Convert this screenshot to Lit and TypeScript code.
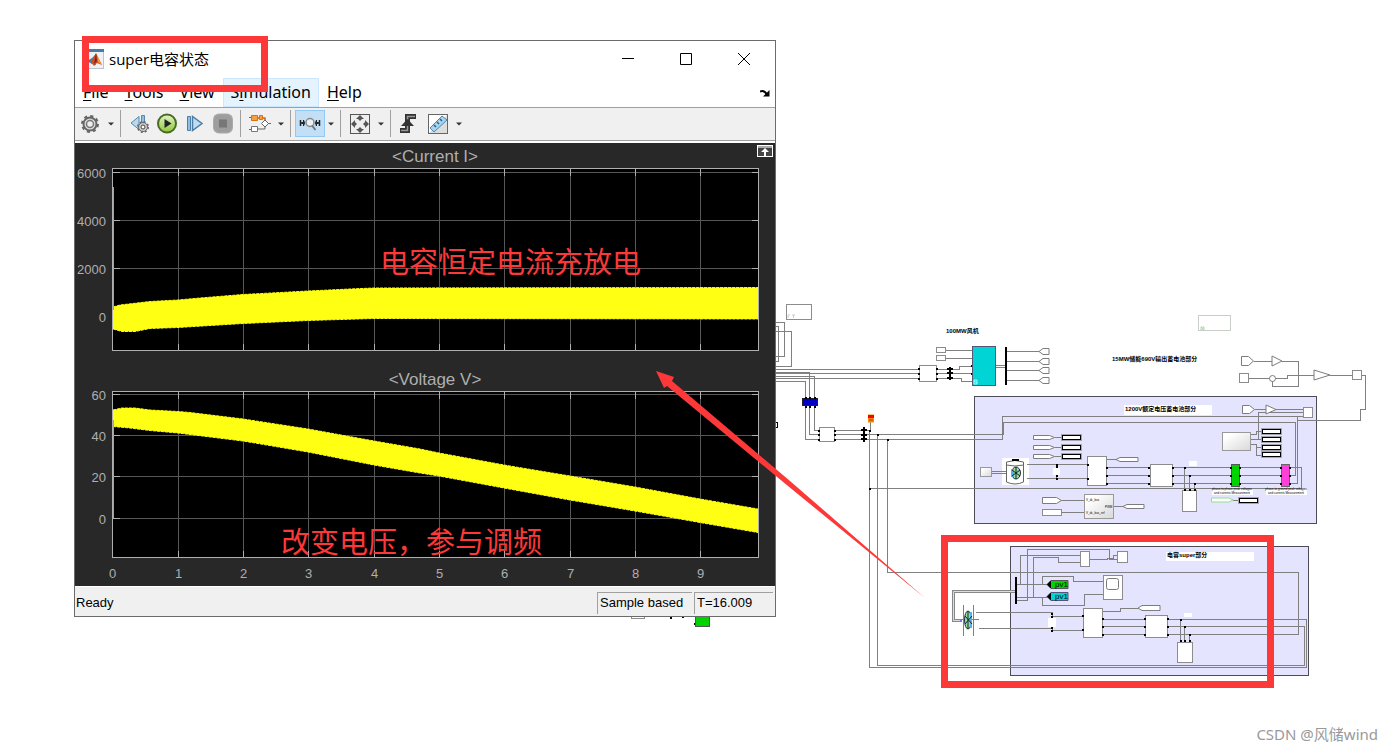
import { LitElement, html, svg, css } from "lit";
import { customElement } from "lit/decorators.js";

const wire = (d: string) => svg`<path class="wire" d=${d}></path>`;
const block = (x: number, y: number, w: number, h: number, cls = "block") =>
  svg`<rect class=${cls} x=${x} y=${y} width=${w} height=${h}></rect>`;
const ports = (pts: number[][]) =>
  pts.map(([x, y]) => svg`<rect class="port" x=${x - 1} y=${y - 1} width="2" height="2"></rect>`);
const tagLeft = (x: number, y: number, w: number, h: number, cls = "tag") =>
  svg`<path class=${cls} d=${`M${x} ${y + h / 2}L${x + 4} ${y}H${x + w}V${y + h}H${x + 4}Z`}></path>`;
const tagRight = (x: number, y: number, w: number, h: number, cls = "tag") =>
  svg`<path class=${cls} d=${`M${x} ${y}H${x + w - 5}L${x + w} ${y + h / 2}L${x + w - 5} ${y + h}H${x}Z`}></path>`;
const display = (x: number, y: number) => svg`
  <rect class="display-rim" x=${x - 1} y=${y - 1} width="21" height="7"></rect>
  <rect class="display" x=${x + 0.5} y=${y + 0.5} width="18" height="4"></rect>`;
const gain = (x: number, y: number, w: number, h: number) =>
  svg`<path class="tag" d=${`M${x} ${y}L${x + w} ${y + h / 2}L${x} ${y + h}Z`}></path>`;

@customElement("model-canvas")
class ModelCanvas extends LitElement {
  static styles = css`
    :host { display: block; }
    .canvas { display: block; width: 100%; height: 100%; }
    .wire { fill: none; stroke: #808080; stroke-width: 1; shape-rendering: crispEdges; }
    .bus { fill: none; stroke: #888; stroke-width: 3; }
    .bus-core { fill: none; stroke: #ddd; stroke-width: 1; }
    .block { fill: #fff; stroke: #8c8c8c; }
    .faint { fill: #fff; stroke: #c8cfc8; }
    .grad { fill: url(#shade); stroke: #999; }
    .white { fill: #fff; }
    .tag { fill: #fff; stroke: #7c7c7c; stroke-width: 1; }
    .tag-green { fill: #fff; stroke: #8fe08f; }
    .panel { fill: #e4e4ff; stroke: #4c4c58; }
    .port, .bar { fill: #000; }
    .display-rim { fill: #a5a5ad; }
    .display { fill: #fff; stroke: #000; stroke-width: 1; }
    .name { font: bold 6px "Liberation Sans", "Noto Sans CJK SC", sans-serif; fill: #000; }
    .tiny { font: 3px "Liberation Sans", sans-serif; fill: #000; }
    .goto { font: 8px "Liberation Sans", sans-serif; fill: #000; }
    .middle { text-anchor: middle; }
    .cyan { fill: #00d4d4; stroke: #557; }
    .green { fill: #00d400; stroke: #555; }
    .magenta { fill: #ff40d8; stroke: #666; }
    .blue { fill: #0000c4; stroke: #223; }
    .turbine { fill: #9ade9a; stroke: #234; }
    .water { fill: #48b6e8; }
    .detail { fill: none; stroke: #123; }
  `;
  render() {
    return html`<svg class="canvas" role="img" aria-label="Model diagram">
      <defs><linearGradient id="shade" x1="0" y1="0" x2="1" y2="1">
        <stop offset="0.2" stop-color="#fff"></stop><stop offset="1" stop-color="#d8d8d8"></stop>
      </linearGradient></defs>

      ${block(974.5, 396.5, 342, 127, "panel")}
      ${block(1010.5, 546.5, 298, 129, "panel")}

      ${wire("M775 322.5H784.5V356.5H775M775 326.5H778.5V361.5H775M775 331.5H791.5V366.5H775")}
      ${wire("M775 369.5H919M775 373.5H919M775 378.5H919")}
      ${wire("M775 372.5H809.5V434.5H819M775 376.5H814.5V430.5H819M775 381.5H805.5V439.5H819")}
      ${wire("M835 430.5H870.5V422M835 434.5H1003.5V422.5H1295.5V475.5H1173M835 439.5H1002.5V416.5H1303")}
      ${wire("M869.5 430.5V667.5H1306.5V619.5H1103M877.5 434.5V665.5H1304.5V626.5H1103M887.5 439.5V572.5H1298.5V634.5H1103")}
      ${wire("M937 369.5H959.5V366.5H972M937 373.5H972M937 378.5H961.5V381.5H972M946 350.5H972M946 358.5H972")}
      ${wire("M996 365.5H1006M996 367.5H1006M1006 351.5H1039M1006 361.5H1039M1006 370.5H1039M1006 380.5H1039")}
      ${block(786.5, 304.5, 25, 15)}
      ${block(1198.5, 315.5, 32, 15, "faint")}
      <path d="M788 318v-3h2M792 315h3M793.500 315v3" fill="none" stroke="#ccc"></path>
      <path d="M1201 327h3v3h-3zM1201 327l3 3" fill="none" stroke="#b5d0b5"></path>
      ${block(802.5, 398.5, 15, 7, "blue")}
      ${ports([[806, 398], [810, 398], [815, 398], [806, 407], [810, 407], [815, 407]])}
      ${block(819.5, 427.5, 15, 14)}
      ${ports([[819, 431], [819, 435], [819, 440], [835, 431], [835, 435], [835, 440], [878, 435], [888, 440], [870, 431]])}
      <path class="bar" d="M863 427h2v15h-2zM861 429h6v2h-6zM861 434h6v2h-6zM861 438h6v2h-6z"></path>
      <rect x="868" y="414.500" width="6" height="8" fill="#f80"></rect><rect x="868" y="415" width="6" height="3" fill="#f00"></rect>
      <path d="M869 420h4" stroke="#840"></path>
      ${block(919.5, 365.5, 17, 16)}
      ${ports([[919, 369], [919, 374], [919, 379], [937, 369], [937, 374], [937, 379], [972, 366], [972, 374]])}
      <path class="bar" d="M949 367h2v13h-2zM947 368h6v2h-6zM947 372h6v2h-6zM947 377h6v2h-6z"></path>
      ${block(936.5, 347.5, 9, 5)}${block(936.5, 355.5, 9, 5)}
      ${block(972.5, 346.5, 23, 39, "cyan")}
      <path d="M974 380h3v4h-3zM974 381l3 2" fill="none" stroke="#9ff"></path>
      <text class="name" x="946" y="333">100MW风机</text>
      <rect class="bar" x="1005" y="347" width="2" height="38"></rect>
      ${[351.5, 361.5, 370.5, 380.5].map((y) => tagLeft(1039, y - 3, 10, 6))}
      <text class="name" x="1112" y="361">15MW储能690V输出蓄电池部分</text>

      ${wire("M1254 361.5H1272M1282 361.5H1298.5V386.5H1272.5V381M1249 378.5H1287.5V375.5H1314M1330 375.5H1352M1362 375.5H1365.5V409.5H1360.5V420.5H1298")}
      ${tagRight(1241.5, 356.5, 12, 9)}${gain(1272, 356, 10, 10)}${block(1239.5, 373.5, 9, 9)}
      <circle class="tag" cx="1272.500" cy="378.500" r="3"></circle>
      ${gain(1314, 370, 16, 10)}${block(1352.5, 370.5, 9, 9)}
      ${wire("M1255 409.5H1303M1303 412.5H1258.5V439.500M1251 434.5H1256.5V431.5H1261M1251 439.5H1261M1251 444.5H1256.5V455.5H1261M1256 447.5H1261")}
      ${block(1124, 405, 88, 10, "white")}
      <text class="name" x="1125" y="411">1200V额定电压蓄电池部分</text>
      ${tagRight(1242.5, 405.5, 12, 8)}${gain(1266, 405, 10, 9)}${block(1303.5, 407.5, 9, 10)}
      ${block(1222.5, 432.5, 28, 18, "grad")}
      ${[429, 437, 445, 452].map((y) => display(1262, y))}

      ${[435.5, 445.5, 454.5].map((y) => svg`${wire(`M1055 ${y + 2}H1062`)}${tagRight(1033.5, y, 21, 4)}${display(1062, y - 0.5)}`)}
      ${block(1002, 458, 27, 27, "white")}
      ${wire("M991 471.5H1006M991 473.5H1006M1027 464.5H1088M1027 478.5H1088M1056.5 464V478M1107 459.5H1117")}
      <path d="M1006.500 462q8.500-3 17 0v20q-8.500 4-17 0zM1006.500 465q8.500 2 17 0" fill="#fff" stroke="#666"></path>
      <path d="M1012 459h7v2h-7z"></path>
      <ellipse class="turbine" cx="1016" cy="473" rx="4.500" ry="6"></ellipse>
      <path class="water" d="M1011 469h3v8h-3z"></path>
      <path class="detail" d="M1016 467v12M1012 470l8 6M1012 476l8-6"></path>
      ${block(980.5, 467.5, 11, 9, "grad")}
      ${block(1053, 468, 7, 7, "white")}
      ${wire("M1107 467.5H1150M1107 475.5H1150M1107 483.5H1150M1173 467.5H1301.5V488.5H870M1173 483.5H1297.5V416.5M1184.5 467V491M1189.5 475V491M1194.5 483V491")}
      ${block(1087.5, 456.5, 19, 29)}
      ${tagLeft(1116, 457.5, 22, 4)}
      ${ports([[1057, 465], [1057, 467], [1057, 476], [1057, 479], [1088, 465], [1088, 479], [1107, 468], [1107, 476], [1107, 484], [1149, 468], [1149, 476], [1149, 484]])}
      ${block(1150.5, 464.5, 22, 22)}
      ${block(1189, 461, 8, 5, "white")}
      ${block(1182.5, 490.5, 14, 21)}
      ${block(1231.5, 464.5, 8, 22, "green")}${block(1281.5, 464.5, 8, 22, "magenta")}
      ${ports([1173, 1231, 1240, 1281, 1290].flatMap((x) => [468, 476, 484].map((y) => [x, y])))}
      ${ports([[1185, 468], [1190, 476], [1195, 484], [1185, 490], [1190, 490], [1195, 490], [870, 489]])}
      ${[1232, 1286].map((x, i) => svg`
        <rect class="white" x=${x - 20} y="489" width="41" height="6"></rect>
        <text class="tiny middle" x=${x} y="490">${i ? "phase-to-ground peak voltages" : "phase-to-phase peak voltages"}</text>
        <text class="tiny middle" x=${x} y="494">and currents Measurement</text>`)}
      ${wire("M1233 500.5H1238M1061 500.5H1084M1061 512.5H1084M1114 506.5H1124")}
      ${tagRight(1211.5, 498, 22, 4, "tag-green")}${display(1239, 498)}
      ${tagRight(1042.5, 497.5, 19, 6)}${block(1042.5, 509.5, 19, 6)}
      ${block(1084.5, 494.5, 29, 24, "grad")}
      <text class="tiny" x="1086" y="501">V_dc_bus</text><text class="tiny" x="1086" y="514">V_dc_bus_ref</text><text class="tiny" x="1105" y="508">PWM</text>
      ${tagLeft(1123, 504.5, 21, 4)}

      ${block(1166, 552, 88, 9, "white")}
      <text class="name" x="1167" y="557">电容super部分</text>
      ${wire("M1016 584.5H1048M1020.5 584V555.5H1080M1016 600.5H1027.5V549.5H1109.5V559.5H1117M1016 597.5H1048M1033.5 597V557.5H1058.5V562.5H1080M1090 559.5H1107V558.5H1113.5V555.5H1117")}
      ${wire("M1042.5 584V576.5H1073.5V581.5H1103M1042.5 597V605.5H1084.5V594.5H1103")}
      ${block(1080.5, 551.5, 9, 15)}${block(1117.5, 551.5, 10, 11)}
      <path class="bus" d="M1016 591.500H953.500V620.500H960"></path><path class="bus-core" d="M1016 591.500H953.500V620.500H960"></path>
      <rect class="bar" x="1015" y="577" width="2" height="27"></rect>
      ${tagLeft(1047, 580.5, 21, 8, "green")}${tagLeft(1047, 592.5, 21, 8, "cyan")}
      <path class="bar" d="M1047 584.500l4-4v8zM1047 596.500l4-4v8z"></path>
      <text class="goto" x="1055" y="587">pv1</text><text class="goto" x="1055" y="599">pv1</text>
      ${block(1103.5, 575.5, 19, 24)}
      <rect class="tag" x="1106.500" y="578.500" width="12" height="11" rx="2"></rect>
      <path class="wire" d="M963.500 605V636M973.500 605V636M960 619.500H979"></path>
      <ellipse class="turbine" cx="968" cy="620" rx="3.500" ry="9"></ellipse>
      <path class="water" d="M970 612h2v16h-2z"></path>
      <path class="detail" d="M968 611v18M965 616l7 8M965 624l7-8"></path>
      <rect x="960" y="619" width="2" height="3" fill="#77f"></rect>
      ${wire("M976 612.5H1052.5V630.5H1083M979 628.5H1052M1052 616.5H1083M1102 611.5H1120.5V608.5H1139M1180.5 619V642M1184.5 626V642M1189.5 634V642")}
      ${block(1048, 618, 8, 9, "white")}
      ${block(1083.5, 608.5, 19, 29)}${tagLeft(1138, 605.5, 22, 5)}
      ${block(1145.5, 615.5, 22, 22)}${block(1177.5, 642.5, 15, 20)}
      ${block(1184, 613, 8, 4, "white")}
      ${ports([[1052, 614], [1052, 617], [1052, 628], [1052, 631], [1083, 616], [1083, 630], [1103, 619], [1103, 627], [1103, 635], [1145, 619], [1145, 627], [1145, 635], [1168, 619], [1168, 627], [1168, 635], [1181, 620], [1185, 627], [1190, 635], [1181, 641], [1185, 641], [1190, 641]])}

      <rect x="775.500" y="422.500" width="2" height="5" fill="#fff" stroke="#000"></rect>
      ${block(631.5, 612.5, 13, 6)}
      ${block(695.5, 613.5, 14, 13, "green")}
      <path class="bar" d="M670 617h2v2h-2zM694 623h1v2h-1zM682 617h2v1h-2z"></path>
    </svg>`;
  }
}

const xs = [178.5, 243.5, 308.5, 374.5, 439.5, 504.5, 570.5, 635.5, 700.5];
const plots = [
  {
    title: "<Current I>", top: 168.5, bottom: 350.5, titleY: 162, spike: "M113.500 187V310",
    ys: [172.5, 220.5, 268.5, 316.5], labels: ["6000", "4000", "2000", "0"],
    band: "M113 307L120 305L150 301.500L178 300L200 298L243 294.500L308 291L350 289L374 288L758 287.500V319L374 318.500L308 320.500L243 323.500L178 327.500L150 328.500L135 331.500H122L113 329Z",
  },
  {
    title: "<Voltage V>", top: 391.5, bottom: 557.5, titleY: 385, spike: "M113.500 420V518",
    ys: [394.5, 435.5, 476.5, 518.5], labels: ["60", "40", "20", "0"],
    band: "M113 410L122 408H135L150 410L178 411.500L190 412.500L243 419L308 429L374 441L420 449L439 453L504 465L570 476L635 487L700 499L758 509V532.500L700 522.500L635 511L570 500L504 488L439 476L420 473L374 465L308 452L243 441L178 433L150 430.500L130 428L113 426.500Z",
  },
];

@customElement("scope-display")
class ScopeDisplay extends LitElement {
  static styles = css`
    :host { display: block; background: #282828; }
    .axes { display: block; width: 100%; }
    .area { fill: #000; }
    .frame { fill: none; stroke: #afafaf; }
    .grid { fill: none; stroke: #575757; }
    .tick { fill: none; stroke: #afafaf; }
    .signal { fill: #ffff13; stroke: #ffff13; stroke-dasharray: 3 1; stroke-width: 1; }
    .spike { stroke: #b5b510; }
    .crisp { shape-rendering: crispEdges; }
    .label { font: 13px "Liberation Sans", sans-serif; fill: #afafaf; }
    .title { font: 17px "Liberation Sans", sans-serif; fill: #afafaf; text-anchor: middle; }
    .end { text-anchor: end; }
    .middle { text-anchor: middle; }
  `;
  render() {
    return html`<svg class="axes" viewBox="75 143 700 443" role="img" aria-label="Scope plots">
      ${plots.map((p) => svg`
        <text class="title" x="435" y=${p.titleY}>${p.title}</text>
        <rect class="area" x="112.500" y=${p.top} width="646" height=${p.bottom - p.top}></rect>
        <g class="crisp">
          <path class="grid" d=${xs.map((x) => `M${x} ${p.top}V${p.bottom}`).join("") + p.ys.map((y) => `M112.500 ${y}H758.500`).join("")}></path>
          <path class="tick" d=${xs.map((x) => `M${x} ${p.top}v7M${x} ${p.bottom}v-7`).join("") + p.ys.map((y) => `M112.500 ${y}h7M758.500 ${y}h-7`).join("")}></path>
        </g>
        <path class="signal" d=${p.band}></path>
        <rect class="frame crisp" x="112.500" y=${p.top} width="646" height=${p.bottom - p.top}></rect>
        <path class="spike crisp" d=${p.spike}></path>
        ${p.labels.map((t, i) => svg`<text class="label end" x="106" y=${p.ys[i] + 5.5}>${t}</text>`)}
      `)}
      ${[112.5, ...xs].map((x, i) => svg`<text class="label middle" x=${x} y="578">${i}</text>`)}
      <rect x="757.500" y="145.500" width="15" height="11" fill="#444" stroke="#fff"></rect>
      <path d="M758 147h14" stroke="#aaa" stroke-width="2"></path>
      <path d="M761 152l4-4 4 4zM764 151h2v5h-2z" fill="#fff"></path>
    </svg>`;
  }
}

const icon = (body: unknown) => html`<svg class="icon" width="24" height="24" viewBox="0 0 24 24" aria-hidden="true">${body}</svg>`;
const teeth = (cx: number, cy: number, r: number) =>
  svg`<circle cx=${cx} cy=${cy} r=${r} fill="none" stroke="#666" stroke-width="2" stroke-dasharray=${`${(r * Math.PI) / 8} ${(r * Math.PI) / 8}`}></circle>`;

const icons = {
  gear: icon(svg`${teeth(12, 12, 8)}<circle cx="12" cy="12" r="6.500" fill="#ddd" stroke="#666" stroke-width="2"></circle><circle cx="12" cy="12" r="3.500" fill="#eee" stroke="#777" stroke-width="1.500"></circle>`),
  back: icon(svg`<path d="M12 4.500v13L4 11z" fill="#b9d9f0" stroke="#5688ad"></path><path d="M14.500 3.500h3v13h-3z" fill="#8fc0e2" stroke="#5688ad"></path>${teeth(16, 15, 5)}<circle cx="16" cy="15" r="4.500" fill="#ccc" stroke="#666"></circle><circle cx="16" cy="15" r="2" fill="#fff" stroke="#444"></circle>`),
  play: icon(svg`<defs><linearGradient id="lime" x1="0" y1="0" x2="0" y2="1"><stop offset="0" stop-color="#e4f4c8"></stop><stop offset="1" stop-color="#8cc63a"></stop></linearGradient></defs><circle cx="12" cy="11.500" r="9" fill="url(#lime)" stroke="#4b6b22" stroke-width="2"></circle><path d="M9.500 7v9l7-4.500z" fill="#222"></path>`),
  forward: icon(svg`<path d="M4.500 4.500h3v14h-3z" fill="#8fc0e2" stroke="#4d7ea5"></path><path d="M9.500 4.500v14l9.500-7z" fill="#c0ddf1" stroke="#4d7ea5" stroke-width="1.500"></path>`),
  stop: icon(svg`<rect x="2" y="1.500" width="20" height="20" rx="6" fill="#aaa"></rect><rect x="3" y="2.500" width="18" height="18" rx="6" fill="#9d9d9d"></rect><rect x="8" y="7.500" width="8" height="8" fill="#777"></rect>`),
  blocks: icon(svg`<path d="M8 6h9v11H8M18 11.500h5M4 5.500H1M4 17.500H1" fill="none" stroke="#666"></path><path d="M10 6h7v5" fill="none" stroke="#e07a1f" stroke-width="1.500"></path><path d="M3.500 3.500h6v5h-6zM11.500 3.500h3v4h-3z" fill="#f6a040" stroke="#d4711d"></path><path d="M3.500 14.500h6v5h-6z" fill="#fff" stroke="#777"></path><path d="M17 8l3.500 3.500L17 15l-3.500-3.500z" fill="#fff" stroke="#666"></path>`),
  zoom: icon(svg`<path d="M2.500 8v6M21.500 8v6" stroke="#222" stroke-width="1.500"></path><path d="M3.500 10.500h2V8l1 3-1 3v-2.500h-2zM20.500 10.500h-2V8l-1 3 1 3v-2.500h2z" fill="#222" stroke="#222"></path><circle cx="12" cy="10.500" r="4" fill="#e8f2fa" stroke="#888" stroke-width="1.500"></circle><path d="M14 13.500l3.500 4.500" stroke="#777" stroke-width="2"></path>`),
  fit: icon(svg`<rect x="2.500" y="2.500" width="19" height="19" fill="#eee" stroke="#555"></rect><path d="M12 3l4 4h-2l-2 2-2-2H8zM12 21l4-4h-2l-2-2-2 2H8zM3 12l4-4v2l2 2-2 2v2zM21 12l-4-4v2l-2 2 2 2v2z" fill="#555"></path>`),
  trigger: icon(svg`<path d="M3 18.500h7.500V4.500H19" fill="none" stroke="#333" stroke-width="5"></path><path d="M4 18.500h6.500V4.500H18" fill="none" stroke="#999" stroke-width="1.500"></path><path d="M4 14l6.500-7 6.500 7z" fill="#333"></path>`),
  measure: icon(svg`<rect x="2.500" y="2.500" width="19" height="19" fill="#ddd" stroke="#666"></rect><path d="M3 3h18L3 21z" fill="#fff"></path><path d="M4 16L16 4l5 4L8 20z" fill="#a8d4ee" stroke="#4d88b0"></path><path d="M8 13l2 2M11 10l2 2M14 7l2 2" stroke="#2d6288" stroke-width="1.500"></path>`),
};

const menus = [["F", "ile", ""], ["T", "ools", ""], ["V", "iew", ""], ["S", "imulation", "hot"], ["H", "elp", ""]];

@customElement("scope-window")
class ScopeWindow extends LitElement {
  static styles = css`
    :host { display: flex; flex-direction: column; box-sizing: border-box; border: 1px solid #6b6b6b; background: #fff; color: #000; }
    button { border: 0; margin: 0; padding: 0; background: none; color: inherit; font: inherit; display: flex; align-items: center; justify-content: center; }
    .titlebar { display: flex; align-items: center; box-sizing: border-box; height: 37px; padding: 0 2px 2px 12px; gap: 5px; font: 15px/20px "Open Sans", "Noto Sans CJK SC", sans-serif; }
    .caption { flex: 1; }
    .controls { display: flex; align-self: stretch; }
    .control { width: 58px; }
    .menubar { display: flex; align-items: stretch; height: 29px; font: 16px/20px "Noto Sans", sans-serif; border-bottom: 1px solid #a0a0a0; }
    .menu { padding: 0 7px 2px; border: 1px solid transparent; }
    .hot { background: #e5f3ff; border-color: #cce8ff; }
    .key { text-decoration: underline; text-underline-offset: 2px; }
    .dock { margin-left: auto; width: 20px; }
    .toolbar { display: flex; align-items: stretch; height: 32px; background: #f0f0f0; border-bottom: 1px solid #a0a0a0; }
    .tool { width: 28px; }
    .wide { width: 30px; }
    .on { box-sizing: border-box; margin: 2px 0 3px; background: #c2dff5; border: 1px solid #90c8f6; }
    .caret { width: 12px; }
    .sep { width: 1px; margin: 2px 4px 3px 3px; background: #a0a0a0; }
    .icon { flex: none; }
    .scope { border-top: 2px solid #fff; }
    .status { display: flex; align-items: center; box-sizing: border-box; height: 30px; gap: 2px; padding: 2px 2px 0 0; background: #f0f0f0; border-top: 1px solid #fff; font: 13px/20px "Liberation Sans", sans-serif; }
    .state { flex: 1; padding-left: 1px; }
    .cell { box-sizing: border-box; padding-left: 2px; height: 22px; border-top: 1px solid #a0a0a0; border-left: 1px solid #a0a0a0; }
    .mode { width: 95px; }
    .time { width: 79px; }
  `;
  private caret(name: string) {
    return html`<button class="caret" aria-label=${name}><svg width="6" height="4" viewBox="0 0 6 4"><path d="M0 .5h6L3 3.500z" fill="#333"></path></svg></button>`;
  }
  render() {
    const sep = html`<span class="sep"></span>`;
    return html`
      <div class="titlebar">
        <svg class="icon" width="17" height="20" viewBox="0 0 17 20" aria-hidden="true">
          <rect x=".5" y=".5" width="16" height="19" fill="#edf2f6" stroke="#b9c4cc"></rect><path d="M0 1.500h17" stroke="#4a7ba6" stroke-width="3"></path>
          <path d="M0 12l5-3 4-4v11l-4-1z" fill="#3b7fa8"></path><path d="M9 4l-5 9 3 4 3-3 5 2z" fill="#d64b20"></path><path d="M9 4l-2 11 3-3z" fill="#7b2222"></path><path d="M10 6l1 7 4 3z" fill="#f39a3b"></path>
        </svg>
        <span class="caption">super电容状态</span>
        <div class="controls">
          <button class="control" aria-label="Minimize"><svg width="12" height="12"><path d="M0 5.500h12" stroke="#000"></path></svg></button>
          <button class="control" aria-label="Maximize"><svg width="12" height="12"><path d="M.5.5h11v11H.5z" fill="none" stroke="#000"></path></svg></button>
          <button class="control" aria-label="Close"><svg width="12" height="12"><path d="M0 0l12 12M12 0L0 12" stroke="#000"></path></svg></button>
        </div>
      </div>
      <div class="menubar">
        ${menus.map(([k, rest, cls]) => html`<button class="menu ${cls}"><span>${cls ? html`${k}<span class="key">i</span>${rest.slice(1)}` : html`<span class="key">${k}</span>${rest}`}</span></button>`)}
        <button class="dock" aria-label="Dock"><svg width="10" height="8" viewBox="0 0 10 8"><path d="M0 2.500q4-2 7 3" fill="none" stroke="#000" stroke-width="2"></path><path d="M9.500 1v6.500H3z"></path></svg></button>
      </div>
      <div class="toolbar">
        <button class="tool wide" aria-label="Settings">${icons.gear}</button>${this.caret("More settings")}${sep}
        <button class="tool" aria-label="Step back">${icons.back}</button>
        <button class="tool" aria-label="Run">${icons.play}</button>
        <button class="tool" aria-label="Step forward">${icons.forward}</button>
        <button class="tool" aria-label="Stop">${icons.stop}</button>${sep}
        <button class="tool wide" aria-label="Highlight block">${icons.blocks}</button>${this.caret("More blocks")}${sep}
        <button class="tool wide on" aria-label="Zoom X">${icons.zoom}</button>${this.caret("More zoom")}${sep}
        <button class="tool wide" aria-label="Fit">${icons.fit}</button>${this.caret("More fit")}${sep}
        <button class="tool" aria-label="Triggers">${icons.trigger}</button>
        <button class="tool wide" aria-label="Measurements">${icons.measure}</button>${this.caret("More measurements")}
      </div>
      <scope-display class="scope"></scope-display>
      <div class="status"><span class="state">Ready</span><span class="cell mode">Sample based</span><span class="cell time">T=16.009</span></div>
    `;
  }
}

@customElement("app-root")
class AppRoot extends LitElement {
  static styles = css`
    :host { display: block; position: relative; min-height: 100vh; background: #fff; overflow: hidden; }
    .model { height: 100vh; }
    .window { position: absolute; left: 74px; top: 40px; width: 702px; }
    .marks { position: absolute; inset: 0; width: 100%; height: 100%; pointer-events: none; }
    .box { fill: none; stroke: #fc3838; stroke-width: 7; }
    .arrow { fill: #fc3838; }
    .note { font: 29px "Noto Sans CJK SC", sans-serif; fill: #fc3838; }
    .credit { position: absolute; right: 14px; bottom: 8px; font: 15px/20px "Noto Sans", "Noto Sans CJK SC", sans-serif; color: #999; }
  `;
  render() {
    return html`
      <model-canvas class="model"></model-canvas>
      <scope-window class="window"></scope-window>
      <svg class="marks">
        <rect class="box" x="85.500" y="39.500" width="179" height="49"></rect>
        <rect class="box" x="944.500" y="538.500" width="326" height="146"></rect>
        <path class="arrow" d="M656 371L674 377L672 381L790 481L925 598L788 486L667 386L664 388Z"></path>
        <text class="note" x="380" y="273">电容恒定电流充放电</text>
        <text class="note" x="281" y="553">改变电压，参与调频</text>
      </svg>
      <span class="credit">CSDN @风储wind</span>
    `;
  }
}
